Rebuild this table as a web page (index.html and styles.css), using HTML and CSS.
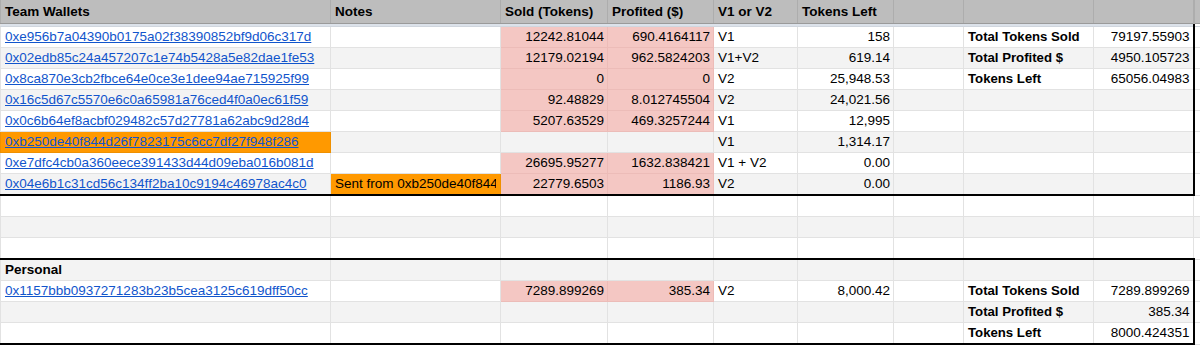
FILE: index.html
```html
<!DOCTYPE html>
<html>
<head>
<meta charset="utf-8">
<link rel="stylesheet" href="styles.css">
</head>
<body>
<table class="sheet">
  <colgroup>
    <col class="c-a"><col class="c-b"><col class="c-c"><col class="c-d"><col class="c-e"><col class="c-f"><col class="c-g"><col class="c-h"><col class="c-i"><col class="c-j">
  </colgroup>
  <tr class="head">
    <th>Team Wallets</th><th>Notes</th><th>Sold (Tokens)</th><th>Profited ($)</th><th>V1 or V2</th><th>Tokens Left</th><th></th><th></th><th class="rb"></th><th class="out"></th>
  </tr>
  <tr class="freeze"><td colspan="9" class="rb"></td><td class="out"></td></tr>
  <tr>
    <td><a href="#">0xe956b7a04390b0175a02f38390852bf9d06c317d</a></td><td></td><td class="num pink">12242.81044</td><td class="num pink">690.4164117</td><td>V1</td><td class="num">158</td><td></td><td class="b lbl">Total Tokens Sold</td><td class="num rb">79197.55903</td><td class="out"></td>
  </tr>
  <tr class="alt">
    <td><a href="#">0x02edb85c24a457207c1e74b5428a5e82dae1fe53</a></td><td></td><td class="num pink">12179.02194</td><td class="num pink">962.5824203</td><td>V1+V2</td><td class="num">619.14</td><td></td><td class="b lbl">Total Profited $</td><td class="num rb">4950.105723</td><td class="out"></td>
  </tr>
  <tr>
    <td><a href="#">0x8ca870e3cb2fbce64e0ce3e1dee94ae715925f99</a></td><td></td><td class="num pink">0</td><td class="num pink">0</td><td>V2</td><td class="num">25,948.53</td><td></td><td class="b lbl">Tokens Left</td><td class="num rb">65056.04983</td><td class="out"></td>
  </tr>
  <tr class="alt">
    <td><a href="#">0x16c5d67c5570e6c0a65981a76ced4f0a0ec61f59</a></td><td></td><td class="num pink">92.48829</td><td class="num pink">8.012745504</td><td>V2</td><td class="num">24,021.56</td><td></td><td></td><td class="rb"></td><td class="out"></td>
  </tr>
  <tr>
    <td><a href="#">0x0c6b64ef8acbf029482c57d27781a62abc9d28d4</a></td><td></td><td class="num pink">5207.63529</td><td class="num pink">469.3257244</td><td>V1</td><td class="num">12,995</td><td></td><td></td><td class="rb"></td><td class="out"></td>
  </tr>
  <tr class="alt">
    <td class="orange"><a href="#">0xb250de40f844d26f7823175c6cc7df27f948f286</a></td><td></td><td></td><td></td><td>V1</td><td class="num">1,314.17</td><td></td><td></td><td class="rb"></td><td class="out"></td>
  </tr>
  <tr>
    <td><a href="#">0xe7dfc4cb0a360eece391433d44d09eba016b081d</a></td><td></td><td class="num pink">26695.95277</td><td class="num pink">1632.838421</td><td>V1 + V2</td><td class="num">0.00</td><td></td><td></td><td class="rb"></td><td class="out"></td>
  </tr>
  <tr class="alt bb">
    <td><a href="#">0x04e6b1c31cd56c134ff2ba10c9194c46978ac4c0</a></td><td class="orange"><div class="clip">Sent from 0xb250de40f844d26f7823175c6cc7df27f948f286</div></td><td class="num pink">22779.6503</td><td class="num pink">1186.93</td><td>V2</td><td class="num">0.00</td><td></td><td></td><td class="rb"></td><td class="out"></td>
  </tr>
  <tr><td></td><td></td><td></td><td></td><td></td><td></td><td></td><td></td><td></td><td></td></tr>
  <tr class="alt"><td></td><td></td><td></td><td></td><td></td><td></td><td></td><td></td><td></td><td></td></tr>
  <tr><td></td><td></td><td></td><td></td><td></td><td></td><td></td><td></td><td></td><td></td></tr>
  <tr class="alt bt">
    <td class="b">Personal</td><td></td><td></td><td></td><td></td><td></td><td></td><td></td><td class="rb"></td><td class="out"></td>
  </tr>
  <tr>
    <td><a href="#">0x1157bbb0937271283b23b5cea3125c619dff50cc</a></td><td></td><td class="num pink">7289.899269</td><td class="num pink">385.34</td><td>V2</td><td class="num">8,000.42</td><td></td><td class="b lbl">Total Tokens Sold</td><td class="num rb">7289.899269</td><td class="out"></td>
  </tr>
  <tr class="alt">
    <td></td><td></td><td></td><td></td><td></td><td></td><td></td><td class="b lbl">Total Profited $</td><td class="num rb">385.34</td><td class="out"></td>
  </tr>
  <tr class="bb">
    <td></td><td></td><td></td><td></td><td></td><td></td><td></td><td class="b lbl">Tokens Left</td><td class="num rb">8000.424351</td><td class="out"></td>
  </tr>
</table>
</body>
</html>
```

FILE: styles.css
```css
html, body {
  margin: 0;
  padding: 0;
  background: #ffffff;
}

.sheet {
  border-collapse: collapse;
  table-layout: fixed;
  width: 1200px;
  font-family: "Liberation Sans", Arial, sans-serif;
  font-size: 13.5px;
  color: #000000;
}

.c-a { width: 330px; }
.c-b { width: 170px; }
.c-c { width: 107px; }
.c-d { width: 106px; }
.c-e { width: 84px; }
.c-f { width: 96px; }
.c-g { width: 70px; }
.c-h { width: 130px; }
.c-i { width: 100px; }
.c-j { width: 7px; }

.sheet th,
.sheet td {
  height: 20px;
  padding: 0 4px 0 4px;
  line-height: 20px;
  border: 1px solid #e2e2e2;
  white-space: nowrap;
  overflow: hidden;
  text-align: left;
  vertical-align: middle;
}

.sheet .head th {
  height: 23px;
  background: #bdbdbd;
  font-weight: bold;
  border-color: #adadad;
  border-bottom: 1px solid #9a9a9a;
  border-top: none;
}

.sheet .freeze td {
  height: 2px;
  line-height: 2px;
  padding: 0;
  background: #dce2ea;
  border-top: none;
  border-bottom: 1px solid #d0d6de;
}

.sheet tr.alt td {
  background: #f3f3f3;
}

.sheet td.num {
  text-align: right;
  padding-right: 3px;
}

.sheet td.b {
  font-weight: bold;
}

.sheet td.lbl {
  font-size: 13.2px;
}

.sheet tr td.pink {
  background: #f4c7c3;
  border-color: #ecbcb8;
}

.sheet tr td.orange {
  background: #ff9900;
  border-color: #ef9000;
}

.clip {
  width: 100%;
  overflow: hidden;
  white-space: nowrap;
  text-overflow: clip;
}

.sheet a {
  color: #1155cc;
  text-decoration: underline;
}

.sheet .rb {
  border-right: 2px solid #000000;
}

.sheet tr.bb td {
  border-bottom: 2px solid #000000;
}

.sheet tr.bt td {
  border-top: 2px solid #000000;
}

.sheet tr.bb td.out,
.sheet tr.bt td.out {
  border-bottom-color: #e2e2e2;
  border-top-color: #e2e2e2;
  border-bottom-width: 1px;
  border-top-width: 1px;
}

.sheet tr td.out,
.sheet tr.alt td.out {
  background: #ffffff;
}
```
